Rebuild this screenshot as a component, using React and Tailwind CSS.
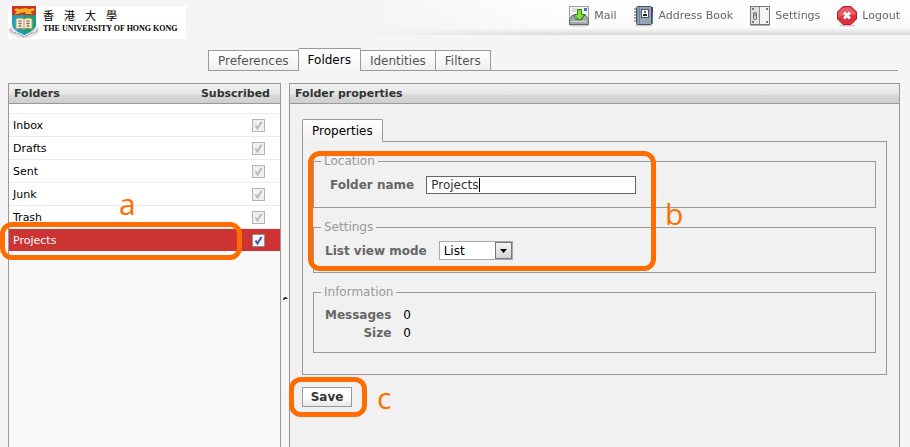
import { useState } from "react";

const FOLDERS = ["Inbox", "Drafts", "Sent", "Junk", "Trash", "Projects"];

const TABS = ["Preferences", "Folders", "Identities", "Filters"];

function Crest() {
  return (
    <svg width="32" height="33" viewBox="0 0 32 33" className="shrink-0" aria-hidden="true">
      <path d="M4 20 Q0 22 1 26 Q2 29 6 29 Q10 33 16 32 Q22 33 26 29 Q30 29 31 26 Q32 22 28 20 Z" fill="#e4e1e8" />
      <path d="M2 23 Q3 27 9 27 L16 31 L23 27 Q29 27 30 23" fill="none" stroke="#8d8798" strokeDasharray="2 1" />
      <path d="M4 9 H28 V18 Q28 24 16 29 Q4 24 4 18 Z" fill="#1d9fc0" />
      <path d="M16 9 H28 V18 Q28 24 16 29 Z" fill="#14a07d" />
      <path d="M4 0 H28 V9 H4 Z" fill="#d0321d" />
      <path d="M6 4 Q8 1 11 3 L18 2 Q22 4 24 2 L27 3 Q26 6 22 5 L25 8 H18 L17 6 L12 7 L10 8 H6 L9 6 Z" fill="#f0b429" />
      <path d="M8 13 Q12 11 16 13 Q20 11 24 13 V23 Q20 21 16 23 Q12 21 8 23 Z" fill="#f7f3e6" stroke="#c99b3a" />
      <path d="M16 13 V23" stroke="#b88b2d" />
      <path d="M10 15 H14 M10 17.500 H14 M10 20 H14 M12 14 V21 M18 15 H22 M18 17.500 H22 M18 20 H22 M20 14 V21" stroke="#77716a" strokeWidth=".8" />
    </svg>
  );
}

function MailIcon() {
  return (
    <svg width="22" height="22" viewBox="0 0 22 22" aria-hidden="true">
      <ellipse cx="11" cy="20.500" rx="10" ry="1" fill="#ccc" />
      <rect x="1.500" y="1.500" width="19" height="12" fill="#f4f5f7" stroke="#9a9da3" />
      <rect x="16" y="3" width="3" height="3" fill="#3774d8" />
      <path d="M4 4 H9 M4 6 H8" stroke="#bfc2c8" />
      <path d="M1.500 19.500 V14.500 L4 10.500 H6 L8 14.500 H14 L16 10.500 H18 L20.500 14.500 V19.500 Z" fill="#a4a7aa" stroke="#66696c" />
      <path d="M3 16.500 H19" stroke="#d7dadd" />
      <path d="M9.500 4.500 H13.500 V9.500 H17 L11.500 15.500 L6 9.500 H9.500 Z" fill="#7be62f" stroke="#2f7c12" />
    </svg>
  );
}

function BookIcon() {
  return (
    <svg width="22" height="22" viewBox="0 0 22 22" aria-hidden="true">
      <ellipse cx="11" cy="20.500" rx="9" ry="1" fill="#ccc" />
      <rect x="17" y="2" width="3" height="5" fill="#3a3f46" />
      <rect x="17" y="7" width="3" height="4" fill="#9d3ab0" />
      <rect x="17" y="11" width="3" height="4" fill="#3c79d0" />
      <rect x="17" y="15" width="3" height="4" fill="#3fa65b" />
      <rect x="3.500" y="1.500" width="15" height="18" rx="1" fill="#93a5b7" stroke="#46525f" />
      <path d="M6.500 2 V19" stroke="#6d7f92" />
      <path d="M1 4 H5 M1 7 H5 M1 10 H5 M1 13 H5 M1 16 H5" stroke="#5a5a5a" />
      <rect x="8.500" y="4.500" width="7" height="8" fill="#fafafa" stroke="#4b5764" />
      <circle cx="12" cy="7" r="1" fill="#222" />
      <path d="M10 11 V9 H14 V11 Z" fill="#222" />
    </svg>
  );
}

function SettingsIcon() {
  return (
    <svg width="22" height="22" viewBox="0 0 22 22" aria-hidden="true">
      <rect x="1.500" y="1.500" width="19" height="18" fill="#f4f4f4" stroke="#777" />
      <rect x="2" y="2" width="8" height="17" fill="#e2e2e2" />
      <path d="M10.500 2 V19" stroke="#888" />
      <path d="M1 20.500 H21" stroke="#aaa" />
      <rect x="4.500" y="7.500" width="3" height="7" rx="1" fill="#a5a5a5" stroke="#666" />
      <path d="M6 11 V14" stroke="#fff" />
      <path d="M3 4 H5 M3 17 H5 M17 4 H19 M17 17 H19" stroke="#777" strokeWidth="2" />
    </svg>
  );
}

function LogoutIcon() {
  return (
    <svg width="22" height="22" viewBox="0 0 22 22" aria-hidden="true">
      <ellipse cx="11" cy="20.500" rx="8" ry="1" fill="#c9c9c9" />
      <path d="M7 1.500 H15 L20.500 7 V14 L15 19.500 H7 L1.500 14 V7 Z" fill="#e0303f" stroke="#a91f2c" />
      <path d="M7.500 2.500 H14.500 L19.500 7.500 V10 Q11 9 2.500 12 V7.500 Z" fill="#f0707a" opacity=".7" />
      <path d="M8 7.500 L14 13.500 M14 7.500 L8 13.500" stroke="#fff" strokeWidth="3" />
    </svg>
  );
}

function NavLink({ icon, label }) {
  return (
    <a href="#" className="flex items-center gap-1 text-[11px] text-[#666]">
      {icon}
      {label}
    </a>
  );
}

function PanelHeader({ children }) {
  return (
    <div className="flex h-5 shrink-0 items-center justify-between border-b border-[#999] bg-[linear-gradient(#f1f3f2,#e2e5e3_55%,#d8d8d8_56%,#cfcfcf)] pt-px pr-[10px] pl-[5px] text-[11px] font-bold text-[#333]">
      {children}
    </div>
  );
}

function FolderRow({ name, selected }) {
  const [checked, setChecked] = useState(true);
  const own = name === "Projects";

  return (
    <li
      className={`relative flex items-center justify-between pr-[15px] pl-1 text-[11px] ${
        selected ? "h-[22px] bg-[#c33] text-white" : "h-[23px] border-b border-[#ebebeb] bg-white text-black"
      }`}
    >
      <label htmlFor={name} className="pt-0.5">{name}</label>
      <span className="relative flex">
        <input
          id={name}
          type="checkbox"
          checked={checked}
          disabled={!own}
          onChange={(e) => setChecked(e.target.checked)}
          className="size-[13px] appearance-none border border-[#b4b4b4] bg-[#f0f0f0] enabled:border-[#8e8f8f] enabled:bg-[#f4f4f4]"
        />
        {checked && (
          <svg viewBox="0 0 13 13" className="pointer-events-none absolute inset-0 size-[13px]" aria-hidden="true">
            <path d="M3.500 6.500 L5.500 9.500 L9.500 3" fill="none" strokeWidth="2" stroke={own ? "#40579c" : "#b9b9b9"} />
          </svg>
        )}
      </span>

      {selected && <Callout letter="a" box="-top-[7px] -left-[9px] h-[38px] w-[242px]" text="-top-[41px] left-[110px]" />}
    </li>
  );
}

// rounded orange marker with its letter
function Callout({ letter, box, text }) {
  return (
    <>
      <span className={`pointer-events-none absolute z-10 rounded-xl border-5 border-[#ff6c00] ${box}`} />
      <span className={`pointer-events-none absolute z-10 font-['Open_Sans',sans-serif] text-[30px] leading-8 text-[#ff6c00] ${text}`}>
        {letter}
      </span>
    </>
  );
}

function Group({ title, className, children }) {
  return (
    <fieldset className={`border border-[#999] pl-[7px] ${className}`}>
      <legend className="px-[3px] text-[12px] leading-[14px] text-[#999]">{title}</legend>
      {children}
    </fieldset>
  );
}

export default function App() {
  const [folderName, setFolderName] = useState("Projects");

  return (
    <div className="flex h-screen flex-col overflow-hidden bg-[#f5f5f5] font-['DejaVu_Sans',sans-serif]">

      {/* Top bar */}
      <header className="flex h-12 shrink-0 items-start justify-between">
        <div className="mt-[6px] ml-2 flex h-[33px] w-[178px] items-center bg-white">
          <Crest />
          <div className="ml-[3px] font-['Liberation_Serif','Noto_Sans_CJK_TC',serif] whitespace-nowrap text-black">
            <div className="flex gap-[10px] text-[11px] leading-[13px]">
              <span>香</span>
              <span>港</span>
              <span>大</span>
              <span>學</span>
            </div>
            <div className="text-[8px] leading-3 font-bold">THE UNIVERSITY OF HONG KONG</div>
          </div>
        </div>

        <nav className="flex h-[35px] items-center gap-4 bg-[linear-gradient(#fff,#fafafa_80%,#d6d6d6)] mask-[linear-gradient(to_right,transparent,black_200px)] pr-[10px] pb-[3px] pl-[200px]">
          <NavLink icon={<MailIcon />} label="Mail" />
          <NavLink icon={<BookIcon />} label="Address Book" />
          <NavLink icon={<SettingsIcon />} label="Settings" />
          <NavLink icon={<LogoutIcon />} label="Logout" />
        </nav>
      </header>

      {/* Section tabs */}
      <div className="mr-3 ml-[208px] flex h-[23px] shrink-0 items-end">
        {TABS.map((tab) => (
          <button
            key={tab}
            className={`border-[#999] px-[9px] text-[12px] ${
              tab === "Folders"
                ? "h-[23px] rounded-t-xs border-x border-t bg-[linear-gradient(#fff,#f5f5f5)] text-black"
                : "h-[21px] border-t border-r border-b bg-[linear-gradient(#fff,#f0f0f0)] text-[#555] first:border-r-0 first:border-l"
            }`}
          >
            {tab}
          </button>
        ))}
        <div className="flex-1 border-b border-[#999]" />
      </div>

      <main className="mt-3 flex min-h-0 flex-1 pr-[10px] pl-2">

        {/* Folder list */}
        <section className="flex w-[273px] shrink-0 flex-col border-x border-t border-[#999] bg-[#f9f9f9]">
          <PanelHeader>
            <span>Folders</span>
            <span>Subscribed</span>
          </PanelHeader>
          <ul>
            <li className="h-[10px] border-b border-[#ebebeb] bg-white" />
            {FOLDERS.map((name) => (
              <FolderRow key={name} name={name} selected={name === "Projects"} />
            ))}
          </ul>
        </section>

        {/* Splitter */}
        <div className="flex w-2 shrink-0 justify-center pt-[213px]">
          <svg width="5" height="5" viewBox="0 0 5 5" aria-hidden="true">
            <path d="M0 4 Q0 1 3 1 L5 3 H2 L1 4 Z" fill="#222" />
          </svg>
        </div>

        {/* Folder properties */}
        <section className="flex min-w-0 flex-1 flex-col border-x border-t border-[#999] bg-[#f1f1f1]">
          <PanelHeader>
            <span>Folder properties</span>
          </PanelHeader>

          <form className="px-3 pt-[15px]" onSubmit={(e) => e.preventDefault()}>
            <button
              type="button"
              className="relative z-1 -mb-px block h-[23px] rounded-t-xs border-x border-t border-[#999] bg-[linear-gradient(#fff,#f1f1f1)] px-[9px] text-[12px] text-black"
            >
              Properties
            </button>

            <div className="relative border border-[#999] px-[10px] pt-3 pb-[21px] text-[12px]">
              <Group title="Location" className="h-[54px]">
                <div className="flex items-center gap-3 pt-2 pl-[9px]">
                  <label htmlFor="folder-name" className="font-bold text-[#666]">Folder name</label>
                  <span className="relative flex">
                    <input
                      id="folder-name"
                      value={folderName}
                      onChange={(e) => setFolderName(e.target.value)}
                      className="peer h-[18px] w-[210px] border border-[#666] bg-white px-1 text-[#333] outline-none"
                    />
                    {/* text cursor */}
                    <span className="absolute top-0.5 left-[53px] h-[14px] w-px bg-black peer-focus:hidden" />
                  </span>
                </div>
              </Group>

              <Group title="Settings" className="mt-3 h-[53px]">
                <div className="flex items-center gap-3 pt-[7px] pl-1">
                  <label htmlFor="view-mode" className="font-bold text-[#666]">List view mode</label>
                  <span className="relative flex">
                    <select
                      id="view-mode"
                      className="h-[19px] w-[74px] appearance-none border border-[#aaa] bg-white px-1 text-black outline-none"
                    >
                      <option>List</option>
                      <option>Threads</option>
                    </select>
                    <span className="pointer-events-none absolute top-px right-px flex h-[17px] w-[17px] items-center justify-center border border-[#777] bg-[linear-gradient(#f5f5f5,#d5d5d5)]">
                      <svg width="7" height="4" viewBox="0 0 7 4" aria-hidden="true">
                        <path d="M0 0 H7 L3.500 4 Z" fill="#000" />
                      </svg>
                    </span>
                  </span>
                </div>
              </Group>

              <Group title="Information" className="mt-3 h-[68px]">
                <table className="mt-[7px] ml-1 leading-[18px]">
                  <tbody>
                    <tr>
                      <th className="pr-3 text-right text-[#666]">Messages</th>
                      <td>0</td>
                    </tr>
                    <tr>
                      <th className="pr-3 text-right text-[#666]">Size</th>
                      <td>0</td>
                    </tr>
                  </tbody>
                </table>
              </Group>

              <Callout letter="b" box="top-[9px] left-[5px] h-[120px] w-[348px]" text="top-[56px] left-[362px]" />
            </div>

            <div className="relative mt-3 w-max">
              <button className="block h-5 w-[50px] border border-[#999] bg-[linear-gradient(#fff,#fff_50%,#e8e8e8)] text-[12px] font-bold text-[#333]">
                Save
              </button>
              <Callout letter="c" box="-top-[10px] -left-[13px] h-10 w-[78px]" text="-top-[5px] left-[75px]" />
            </div>
          </form>
        </section>
      </main>
    </div>
  );
}
